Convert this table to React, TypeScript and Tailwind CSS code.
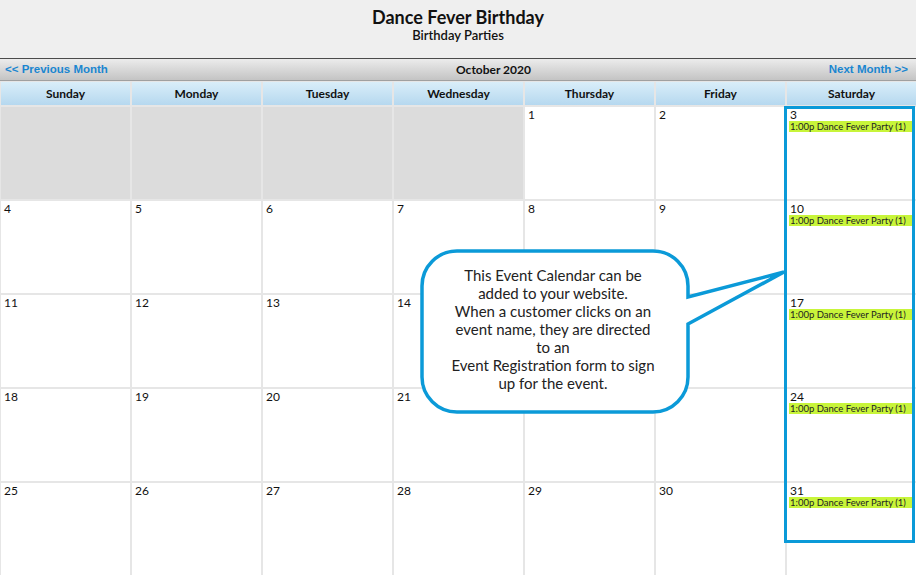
import React from "react";

const DAYS = ["Sunday", "Monday", "Tuesday", "Wednesday", "Thursday", "Friday", "Saturday"];

// October 2020 starts on a Thursday
const CELLS: (number | null)[] = [
  null, null, null, null, 1, 2, 3,
  4, 5, 6, 7, 8, 9, 10,
  11, 12, 13, 14, 15, 16, 17,
  18, 19, 20, 21, 22, 23, 24,
  25, 26, 27, 28, 29, 30, 31,
];

const EVENT_DAYS = [3, 10, 17, 24, 31];

const lato = "font-['Lato','Noto_Sans',sans-serif]";

export default function App() {
  return (
    <div className={`relative w-[916px] h-[575px] overflow-hidden bg-white ${lato}`}>
      <header className="h-[58px] bg-[#efefef] flex flex-col items-center pt-[6px]">
        <h1 className="text-[18px] leading-[22px] font-bold text-[#111]">Dance Fever Birthday</h1>
        <div className="text-[13px] leading-[14px] font-semibold text-[#111]">Birthday Parties</div>
      </header>

      <nav className="h-[23px] border-t border-t-[#4b4b4b] border-b border-b-[#a0a0a0] bg-gradient-to-b from-[#ececec] to-[#c4c4c4] flex items-center px-[5px] font-['Liberation_Sans',sans-serif] text-[11.5px] font-bold">
        <a className="text-[#1a86d0] w-[451px]">&lt;&lt; Previous Month</a>
        <span className={`text-[#111] ${lato} text-[12px]`}>October 2020</span>
        <a className="text-[#1a86d0] flex-1 text-right pr-[3px]">Next Month &gt;&gt;</a>
      </nav>

      <div className="grid grid-cols-[repeat(7,129px)] gap-[2px] bg-[#e6e6e6] pt-[1px] pl-[1px]">
        {DAYS.map((d) => (
          <div
            key={d}
            className="h-[23px] bg-gradient-to-b from-[#d9eef9] to-[#b6d8ef] flex items-center justify-center text-[12px] font-bold text-[#111]"
          >
            {d}
          </div>
        ))}
        {CELLS.map((n, i) =>
          n === null ? (
            <div key={i} className="h-[92px] bg-[#dcdcdc]" />
          ) : (
            <div key={i} className="h-[92px] bg-white px-[2px] pt-[1px]">
              <div className="text-[12px] leading-[13px] text-[#111] pl-[1px]">{n}</div>
              {EVENT_DAYS.includes(n) && (
                <div className="bg-[#c8f53a] text-[9.5px] leading-[11px] text-[#222] pl-[1px] whitespace-nowrap">
                  1:00p Dance Fever Party (1)
                </div>
              )}
            </div>
          ),
        )}
      </div>

      {/* highlight around Saturday */}
      <div className="absolute left-[784px] top-[106px] w-[131px] h-[437px] border-[3px] border-[#0b9ad8]" />

      {/* callout bubble */}
      <svg className="absolute left-[415px] top-[245px]" width="375" height="175" viewBox="0 0 375 175">
        <path
          d="M42 6 H238 A35 35 0 0 1 273 41 V52 L369 27 L273 79 V132 A35 35 0 0 1 238 167 H42 A35 35 0 0 1 7 132 V41 A35 35 0 0 1 42 6 Z"
          fill="white"
          stroke="#0b9ad8"
          strokeWidth="3.5"
          strokeLinejoin="miter"
        />
      </svg>
      <div className="absolute left-[421px] top-[266px] w-[264px] text-center text-[15px] leading-[18px] text-[#222]">
        This Event Calendar can be
        <br />
        added to your website.
        <br />
        When a customer clicks on an
        <br />
        event name, they are directed
        <br />
        to an
        <br />
        Event Registration form to sign
        <br />
        up for the event.
      </div>
    </div>
  );
}
